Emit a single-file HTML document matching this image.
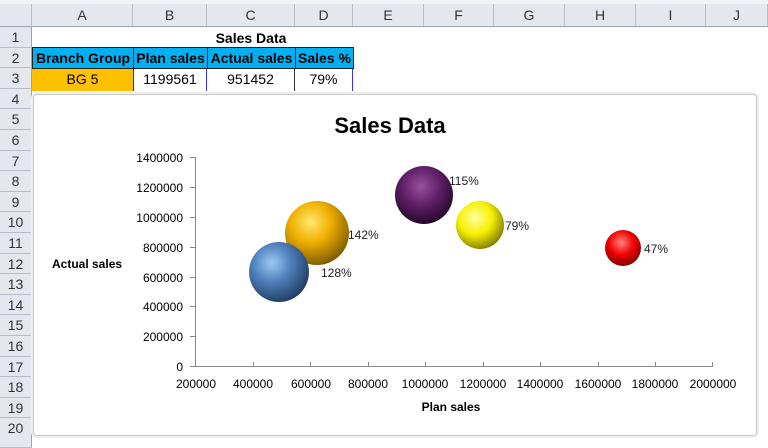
<!DOCTYPE html>
<html><head><meta charset="utf-8"><style>
body{margin:0;width:768px;height:448px;overflow:hidden;background:#fff;font-family:"Liberation Sans",sans-serif;position:relative}
.a{position:absolute}
.ch{background:#e4e8ee;border-right:1px solid #b7bec9;border-bottom:1px solid #9ba6b5;top:4px;height:23px;line-height:23px;text-align:center;color:#333;font-size:14px;box-sizing:border-box}
.rh{background:#e4e8ee;border-bottom:1px solid #b7bec9;border-right:1px solid #9ba6b5;left:0;width:32px;text-align:center;color:#333;font-size:14px;box-sizing:border-box}
.c{box-sizing:border-box;text-align:center;font-size:14px;line-height:21px;height:22px}
.h{background:#00b0f0;font-weight:bold;color:#000;border:1px solid #222}
</style></head><body>
<div class="a" style="left:0;top:0;width:768px;height:4px;background:#f0f2f5;border-bottom:1px solid #b0b8c4"></div>
<div class="a ch" style="left:0;width:32px"></div>
<div class="a ch" style="left:32px;width:101px">A</div>
<div class="a ch" style="left:133px;width:74px">B</div>
<div class="a ch" style="left:207px;width:88px">C</div>
<div class="a ch" style="left:295px;width:58px">D</div>
<div class="a ch" style="left:353px;width:71px">E</div>
<div class="a ch" style="left:424px;width:70px">F</div>
<div class="a ch" style="left:494px;width:71px">G</div>
<div class="a ch" style="left:565px;width:71px">H</div>
<div class="a ch" style="left:636px;width:70px">I</div>
<div class="a ch" style="left:706px;width:62px">J</div>
<div class="a rh" style="top:27px;height:20.6px;line-height:20px">1</div>
<div class="a rh" style="top:47.6px;height:20.6px;line-height:20px">2</div>
<div class="a rh" style="top:68.2px;height:20.6px;line-height:20px">3</div>
<div class="a rh" style="top:88.8px;height:20.6px;line-height:20px">4</div>
<div class="a rh" style="top:109.4px;height:20.6px;line-height:20px">5</div>
<div class="a rh" style="top:130px;height:20.6px;line-height:20px">6</div>
<div class="a rh" style="top:150.6px;height:20.6px;line-height:20px">7</div>
<div class="a rh" style="top:171.2px;height:20.6px;line-height:20px">8</div>
<div class="a rh" style="top:191.8px;height:20.6px;line-height:20px">9</div>
<div class="a rh" style="top:212.4px;height:20.6px;line-height:20px">10</div>
<div class="a rh" style="top:233px;height:20.6px;line-height:20px">11</div>
<div class="a rh" style="top:253.6px;height:20.6px;line-height:20px">12</div>
<div class="a rh" style="top:274.2px;height:20.6px;line-height:20px">13</div>
<div class="a rh" style="top:294.8px;height:20.6px;line-height:20px">14</div>
<div class="a rh" style="top:315.4px;height:20.6px;line-height:20px">15</div>
<div class="a rh" style="top:336px;height:20.6px;line-height:20px">16</div>
<div class="a rh" style="top:356.6px;height:20.6px;line-height:20px">17</div>
<div class="a rh" style="top:377.2px;height:20.6px;line-height:20px">18</div>
<div class="a rh" style="top:397.8px;height:20.6px;line-height:20px">19</div>
<div class="a rh" style="top:418.4px;height:30px;line-height:20px">20</div>
<div class="a" style="left:207px;top:28px;width:88px;text-align:center;font-weight:bold;font-size:14px;line-height:20px">Sales Data</div>
<div class="a c h" style="left:32px;top:47px;width:102px">Branch Group</div>
<div class="a c h" style="left:133px;top:47px;width:75px">Plan sales</div>
<div class="a c h" style="left:207px;top:47px;width:89px">Actual sales</div>
<div class="a c h" style="left:295px;top:47px;width:59px">Sales %</div>
<div class="a c" style="left:32px;top:69px;width:101px;background:#ffc000">BG 5</div>
<div class="a c" style="left:133px;top:69px;width:74px;border-left:1px solid #333;border-right:1px solid #3333ff">1199561</div>
<div class="a c" style="left:207px;top:69px;width:88px;border-right:1px solid #333">951452</div>
<div class="a c" style="left:295px;top:69px;width:58px;border-right:1px solid #3333ff">79%</div>
<div class="a" style="left:33px;top:94px;width:722px;height:340px;border:1px solid #c9c9c9;border-radius:4px;background:#fff;box-shadow:0 0 0 2px #eee"></div>
<svg class="a" style="left:0;top:0" width="768" height="448" font-family="Liberation Sans, sans-serif">
<defs>
<radialGradient id="gB" cx="0.38" cy="0.35" r="0.7"><stop offset="0" stop-color="#9cc8f4"/><stop offset="0.45" stop-color="#4f81bd"/><stop offset="1" stop-color="#1f3a5e"/></radialGradient>
<radialGradient id="gO" cx="0.4" cy="0.33" r="0.7"><stop offset="0" stop-color="#ffe870"/><stop offset="0.45" stop-color="#f0b000"/><stop offset="1" stop-color="#7a5a00"/></radialGradient>
<radialGradient id="gP" cx="0.45" cy="0.35" r="0.7"><stop offset="0" stop-color="#9a4fa0"/><stop offset="0.5" stop-color="#5c1d64"/><stop offset="1" stop-color="#1c0620"/></radialGradient>
<radialGradient id="gY" cx="0.4" cy="0.35" r="0.7"><stop offset="0" stop-color="#ffffa0"/><stop offset="0.5" stop-color="#f5f000"/><stop offset="1" stop-color="#7a7400"/></radialGradient>
<radialGradient id="gR" cx="0.45" cy="0.35" r="0.7"><stop offset="0" stop-color="#ff8080"/><stop offset="0.5" stop-color="#f00000"/><stop offset="1" stop-color="#700000"/></radialGradient>
</defs>
<text x="390" y="133" font-size="22" font-weight="bold" text-anchor="middle">Sales Data</text>
<g stroke="#888" stroke-width="1">
<line x1="195.5" y1="157" x2="195.5" y2="367"/>
<line x1="190" y1="366.5" x2="713" y2="366.5"/>
<line x1="190" y1="157.5" x2="195" y2="157.5"/><line x1="190" y1="187.5" x2="195" y2="187.5"/><line x1="190" y1="217.5" x2="195" y2="217.5"/><line x1="190" y1="247.5" x2="195" y2="247.5"/><line x1="190" y1="277.5" x2="195" y2="277.5"/><line x1="190" y1="306.5" x2="195" y2="306.5"/><line x1="190" y1="336.5" x2="195" y2="336.5"/>
<line x1="253.5" y1="362" x2="253.5" y2="366"/><line x1="310.5" y1="362" x2="310.5" y2="366"/><line x1="368.5" y1="362" x2="368.5" y2="366"/><line x1="425.5" y1="362" x2="425.5" y2="366"/><line x1="483.5" y1="362" x2="483.5" y2="366"/><line x1="540.5" y1="362" x2="540.5" y2="366"/><line x1="598.5" y1="362" x2="598.5" y2="366"/><line x1="655.5" y1="362" x2="655.5" y2="366"/><line x1="712.5" y1="362" x2="712.5" y2="366"/>
</g>
<g font-size="12" text-anchor="end" fill="#000">
<text x="183" y="162">1400000</text><text x="183" y="192">1200000</text><text x="183" y="222">1000000</text><text x="183" y="252">800000</text><text x="183" y="282">600000</text><text x="183" y="311">400000</text><text x="183" y="341">200000</text><text x="183" y="371">0</text>
</g>
<g font-size="12" text-anchor="middle">
<text x="196" y="388">200000</text><text x="253" y="388">400000</text><text x="311" y="388">600000</text><text x="368" y="388">800000</text><text x="425" y="388">1000000</text><text x="483" y="388">1200000</text><text x="540" y="388">1400000</text><text x="598" y="388">1600000</text><text x="655" y="388">1800000</text><text x="713" y="388">2000000</text>
</g>
<text x="451" y="411" font-size="12" font-weight="bold" text-anchor="middle">Plan sales</text>
<text x="52" y="268" font-size="12" font-weight="bold">Actual sales</text>
<circle cx="317" cy="233" r="32" fill="url(#gO)"/>
<circle cx="279" cy="272" r="30" fill="url(#gB)"/>
<circle cx="424" cy="195" r="29" fill="url(#gP)"/>
<circle cx="480" cy="225" r="24" fill="url(#gY)"/>
<circle cx="623" cy="248" r="18" fill="url(#gR)"/>
<g font-size="12" fill="#222">
<text x="348" y="239">142%</text><text x="321" y="277">128%</text><text x="449" y="185">115%</text><text x="505" y="230">79%</text><text x="644" y="253">47%</text>
</g>
</svg>
</body></html>
